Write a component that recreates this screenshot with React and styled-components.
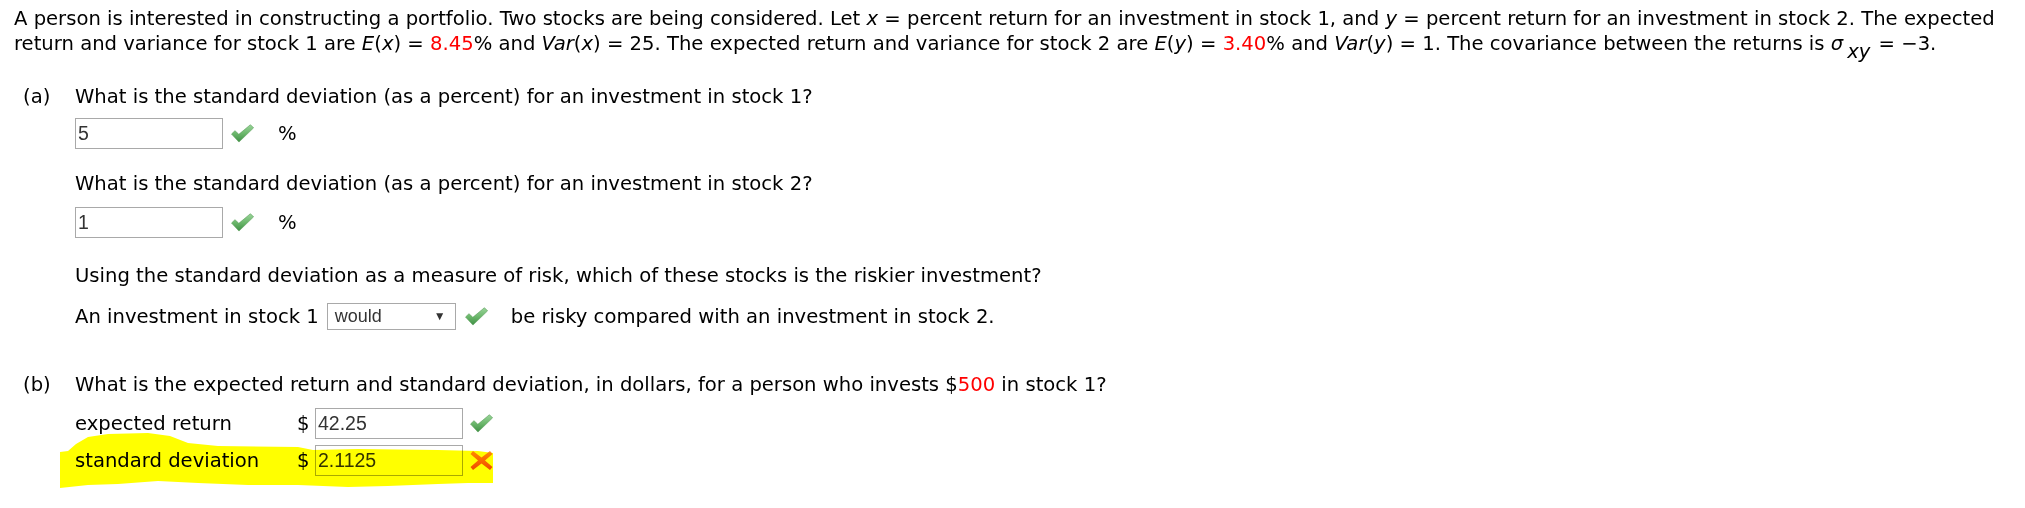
import React from "react";
import styled, { createGlobalStyle } from "styled-components";

const GlobalStyle = createGlobalStyle`
  html, body { margin: 0; padding: 0; background: #fff; }
  body {
    font-family: "DejaVu Sans", Verdana, sans-serif;
    font-size: 19.6px;
    color: #000;
  }
`;

const Page = styled.div`
  padding: 6px 10px 20px 14px;
`;

const Intro = styled.p`
  margin: 0;
  line-height: 25px;
`;

const Red = styled.span`
  color: #f00;
`;

const Var = styled.i`
  font-style: italic;
`;

const Sub = styled.i`
  font-style: italic;
  line-height: 0;
  vertical-align: -8px;
  margin: 0 2px 0 4px;
`;

const Part = styled.section`
  display: grid;
  grid-template-columns: 52px 1fr;
  margin: ${(p) => p.$top}px 0 0 9px;
  line-height: 25px;
`;

const PartLabel = styled.div``;

const PartBody = styled.div`
  display: flex;
  flex-direction: column;
  align-items: flex-start;
`;

const Question = styled.div`
  margin-top: ${(p) => p.$top || 0}px;
  line-height: 25px;
`;

const Row = styled.div`
  position: relative;
  display: flex;
  align-items: center;
  margin-top: ${(p) => p.$top || 0}px;
`;

const Field = styled.input`
  box-sizing: border-box;
  width: 148px;
  height: 31px;
  margin: 0;
  padding: 0 0 0 2px;
  border: 1px solid #a9a9a9;
  border-radius: 0;
  background: transparent;
  font-family: "Liberation Sans", Arial, sans-serif;
  font-size: 19.5px;
  color: #333;
  outline: none;
`;

const Unit = styled.span`
  margin-left: ${(p) => p.$gap}px;
`;

const Dropdown = styled.div`
  box-sizing: border-box;
  display: flex;
  align-items: center;
  justify-content: space-between;
  width: 129px;
  height: 27px;
  margin-left: 8px;
  padding: 0 9px 0 7px;
  border: 1px solid #a9a9a9;
  font-family: "Liberation Sans", Arial, sans-serif;
  font-size: 18px;
  color: #333;
`;

const Arrow = styled.span`
  font-size: 12px;
  color: #333;
`;

const Mark = styled.span`
  display: inline-flex;
  margin-left: ${(p) => p.$gap}px;
`;

const Label = styled.span`
  width: 222px;
`;

const Dollar = styled.span`
  width: 18px;
`;

const Highlight = styled.svg`
  position: absolute;
  left: -17px;
  top: -12px;
  width: 436px;
  height: 56px;
  mix-blend-mode: multiply;
  pointer-events: none;
`;

function Check({ gap }) {
  return (
    <Mark $gap={gap}>
      <svg width="23" height="19" viewBox="0 0 22 18">
        <defs>
          <linearGradient id="chk" x1="0" y1="0" x2="0" y2="1">
            <stop offset="0" stopColor="#9ad49a" />
            <stop offset="0.5" stopColor="#6cb86c" />
            <stop offset="1" stopColor="#3f8f45" />
          </linearGradient>
        </defs>
        <path
          d="M0.5 9.5 L3.8 6.3 L7.5 9.8 L18.6 0.6 L21.6 3.6 L7.6 17.2 Z"
          fill="url(#chk)"
          stroke="#5a9e5a"
          strokeWidth="0.6"
          strokeLinejoin="round"
        />
      </svg>
    </Mark>
  );
}

function Cross({ gap }) {
  return (
    <Mark $gap={gap}>
      <svg width="23" height="21" viewBox="0 0 23 21">
        <defs>
          <linearGradient id="crs" x1="0" y1="0" x2="0" y2="1">
            <stop offset="0" stopColor="#ff8a3a" />
            <stop offset="1" stopColor="#f04a10" />
          </linearGradient>
        </defs>
        <path
          d="M3 1 L11.5 7.5 L20 1 L22.5 4 L15 10.5 L22.5 17 L20 20 L11.5 13.5 L3 20 L0.5 17 L8 10.5 L0.5 4 Z"
          fill="url(#crs)"
          strokeLinejoin="round"
        />
      </svg>
    </Mark>
  );
}

export default function App() {
  return (
    <>
      <GlobalStyle />
      <Page>
        <Intro>
          A person is interested in constructing a portfolio. Two stocks are being considered. Let{" "}
          <Var>x</Var> = percent return for an investment in stock 1, and <Var>y</Var> = percent
          return for an investment in stock 2. The expected return and variance for stock 1 are{" "}
          <Var>E</Var>(<Var>x</Var>) = <Red>8.45</Red>% and <Var>Var</Var>(<Var>x</Var>) = 25. The
          expected return and variance for stock 2 are <Var>E</Var>(<Var>y</Var>) ={" "}
          <Red>3.40</Red>% and <Var>Var</Var>(<Var>y</Var>) = 1. The covariance between the returns
          is <Var>σ</Var>
          <Sub>xy</Sub> = −3.
        </Intro>

        <Part $top={28}>
          <PartLabel>(a)</PartLabel>
          <PartBody>
            <Question>What is the standard deviation (as a percent) for an investment in stock 1?</Question>
            <Row $top={9}>
              <Field readOnly value="5" />
              <Check gap={8} />
              <Unit $gap={24}>%</Unit>
            </Row>
            <Question $top={22}>
              What is the standard deviation (as a percent) for an investment in stock 2?
            </Question>
            <Row $top={11}>
              <Field readOnly value="1" />
              <Check gap={8} />
              <Unit $gap={24}>%</Unit>
            </Row>
            <Question $top={25}>
              Using the standard deviation as a measure of risk, which of these stocks is the riskier
              investment?
            </Question>
            <Row $top={15}>
              <span>An investment in stock 1</span>
              <Dropdown>
                <span>would</span>
                <Arrow>▼</Arrow>
              </Dropdown>
              <Check gap={9} />
              <Unit $gap={23}>be risky compared with an investment in stock 2.</Unit>
            </Row>
          </PartBody>
        </Part>

        <Part $top={42}>
          <PartLabel>(b)</PartLabel>
          <PartBody>
            <Question>
              What is the expected return and standard deviation, in dollars, for a person who
              invests $<Red>500</Red> in stock 1?
            </Question>
            <Row $top={11}>
              <Label>expected return</Label>
              <Dollar>$</Dollar>
              <Field readOnly value="42.25" />
              <Check gap={7} />
            </Row>
            <Row $top={6}>
              <Label>standard deviation</Label>
              <Dollar>$</Dollar>
              <Field readOnly value="2.1125" />
              <Cross gap={7} />
              <Highlight viewBox="0 0 436 56" preserveAspectRatio="none">
                <path
                  d="M2 19 L10 18 L18 11 L30 4 L50 1 L90 0 L112 3 L130 10 L160 13 L240 14 L255 17 L300 16 L380 17 L420 18 L435 20 L435 50 L410 50 L380 51 L330 53 L290 54 L240 52 L190 52 L140 50 L100 48 L60 51 L30 52 L2 55 Z"
                  fill="#ffff00"
                />
              </Highlight>
            </Row>
          </PartBody>
        </Part>
      </Page>
    </>
  );
}
